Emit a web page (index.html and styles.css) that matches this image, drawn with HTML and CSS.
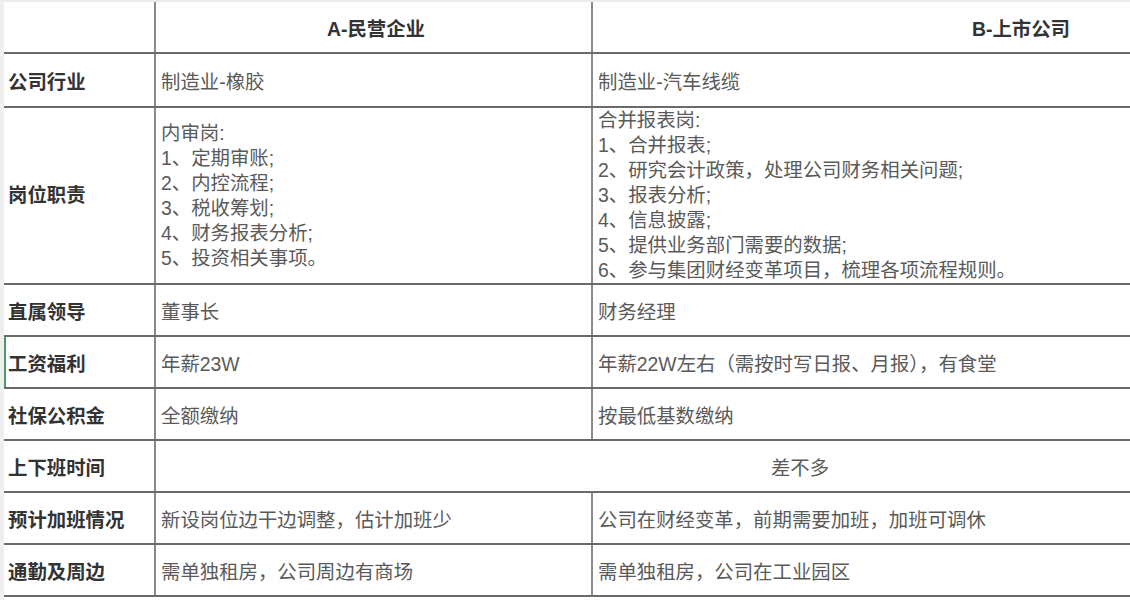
FILE: index.html
```html
<!DOCTYPE html>
<html lang="zh-CN">
<head>
<meta charset="utf-8">
<title>对比表</title>
<link rel="stylesheet" href="styles.css">
</head>
<body>
<div class="sheet">
  <table class="grid">
    <colgroup>
      <col class="c-label">
      <col class="c-a">
      <col class="c-b">
    </colgroup>
    <tr class="row-head">
      <th class="label"></th>
      <th class="head">A-民营企业</th>
      <th class="head">B-上市公司</th>
    </tr>
    <tr class="row row-first">
      <td class="label">公司行业</td>
      <td class="val">制造业-橡胶</td>
      <td class="val">制造业-汽车线缆</td>
    </tr>
    <tr class="row-tall">
      <td class="label">岗位职责</td>
      <td class="val lines">内审岗:<br>1、定期审账;<br>2、内控流程;<br>3、税收筹划;<br>4、财务报表分析;<br>5、投资相关事项。</td>
      <td class="val lines">合并报表岗:<br>1、合并报表;<br>2、研究会计政策，处理公司财务相关问题;<br>3、报表分析;<br>4、信息披露;<br>5、提供业务部门需要的数据;<br>6、参与集团财经变革项目，梳理各项流程规则。</td>
    </tr>
    <tr class="row">
      <td class="label">直属领导</td>
      <td class="val">董事长</td>
      <td class="val">财务经理</td>
    </tr>
    <tr class="row">
      <td class="label selected">工资福利</td>
      <td class="val">年薪23W</td>
      <td class="val">年薪22W左右（需按时写日报、月报），有食堂</td>
    </tr>
    <tr class="row">
      <td class="label">社保公积金</td>
      <td class="val">全额缴纳</td>
      <td class="val">按最低基数缴纳</td>
    </tr>
    <tr class="row">
      <td class="label">上下班时间</td>
      <td class="val merged" colspan="2">差不多</td>
    </tr>
    <tr class="row">
      <td class="label">预计加班情况</td>
      <td class="val">新设岗位边干边调整，估计加班少</td>
      <td class="val">公司在财经变革，前期需要加班，加班可调休</td>
    </tr>
    <tr class="row">
      <td class="label">通勤及周边</td>
      <td class="val">需单独租房，公司周边有商场</td>
      <td class="val">需单独租房，公司在工业园区</td>
    </tr>
  </table>
</div>
</body>
</html>
```

FILE: styles.css
```css
html, body {
  margin: 0;
  padding: 0;
  background: #ffffff;
}

.sheet {
  width: 1126px;
  height: 598px;
  overflow: hidden;
  border-left: 4px solid #efefef;
  border-top: 2px solid #ececec;
  background: #ffffff;
}

.grid {
  width: 1440px;
  table-layout: fixed;
  border-collapse: collapse;
  font-family: "Liberation Sans", "Noto Sans CJK SC", sans-serif;
  font-size: 19.4px;
  color: #5a5a5a;
}

.c-label { width: 151px; }
.c-a { width: 437px; }
.c-b { width: 852px; }

.grid th,
.grid td {
  border-left: 2px solid #8a8a8a;
  border-bottom: 2px solid #6a6a6a;
  padding: 5px 0 0 5px;
  vertical-align: middle;
  text-align: left;
  font-weight: normal;
  line-height: 25px;
}

.grid th:first-child,
.grid td:first-child {
  border-left: none;
  padding-left: 4px;
}

.row-head th { height: 45px; }
.row td { height: 45px; }
.row-first td { height: 47px; }
.row-tall td { height: 174px; padding-top: 0; }

.head {
  text-align: center !important;
  font-weight: bold !important;
  color: #333333;
}

.label {
  font-weight: bold !important;
  color: #333333;
}

.selected {
  box-shadow: inset 2px 0 0 #4a9d6a;
}

.merged {
  text-align: center !important;
  padding-left: 0 !important;
}
```
